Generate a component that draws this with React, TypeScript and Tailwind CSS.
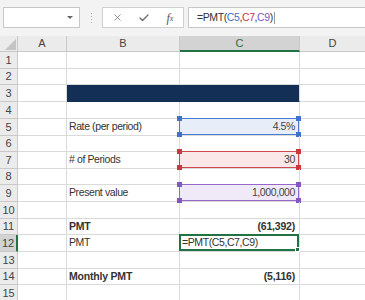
import { X, Check } from 'lucide-react'

type Tone = 'blue' | 'red' | 'purple'

const tones = {
  blue: { fill: 'bg-[#e8eef9]', line: 'border-[#4a7bd0]', dot: 'bg-[#3f72c9]' },
  red: { fill: 'bg-[#fae8e8]', line: 'border-[#d0474f]', dot: 'bg-[#c8383f]' },
  purple: { fill: 'bg-[#f0eaf8]', line: 'border-[#9368c9]', dot: 'bg-[#8457bf]' },
}

interface Row {
  n: number
  h: string
  label?: string
  value?: string
  bold?: boolean
  tone?: Tone
  band?: boolean
  active?: boolean
}

const rows: Row[] = [
  { n: 1, h: 'h-[17px]' },
  { n: 2, h: 'h-[16px]' },
  { n: 3, h: 'h-[17px]', band: true },
  { n: 4, h: 'h-[17px]' },
  { n: 5, h: 'h-[17px]', label: 'Rate (per period)', value: '4.5%', tone: 'blue' },
  { n: 6, h: 'h-[16px]' },
  { n: 7, h: 'h-[17px]', label: '# of Periods', value: '30', tone: 'red' },
  { n: 8, h: 'h-[16px]' },
  { n: 9, h: 'h-[17px]', label: 'Present value', value: '1,000,000', tone: 'purple' },
  { n: 10, h: 'h-[17px]' },
  { n: 11, h: 'h-[16px]', label: 'PMT', value: '(61,392)', bold: true },
  { n: 12, h: 'h-[17px]', label: 'PMT', active: true },
  { n: 13, h: 'h-[17px]' },
  { n: 14, h: 'h-[16px]', label: 'Monthly PMT', value: '(5,116)', bold: true },
  { n: 15, h: 'h-[17px]' },
]

function Handles({ dot }: { dot: string }) {
  return (
    <>
      <span className={`absolute -left-[3px] -top-[3px] w-[5px] h-[5px] ${dot}`} />
      <span className={`absolute -right-[3px] -top-[3px] w-[5px] h-[5px] ${dot}`} />
      <span className={`absolute -left-[3px] -bottom-[3px] w-[5px] h-[5px] ${dot}`} />
      <span className={`absolute -right-[3px] -bottom-[3px] w-[5px] h-[5px] ${dot}`} />
    </>
  )
}

function Toolbar() {
  return (
    <div className="h-[36px] bg-[#f3f3f3] flex items-start pt-[7px] pl-[3px]">
      {/* Name box */}
      <div className="w-[77px] h-[21px] bg-white border border-[#c8c8c8] flex items-center justify-end pr-[6px]">
        <span className="w-0 h-0 border-l-[3px] border-r-[3px] border-t-[3px] border-l-transparent border-r-transparent border-t-[#666]" />
      </div>
      <div className="w-[22px] h-[21px] flex flex-col items-center justify-center gap-[2px]">
        <span className="w-[1px] h-[1px] bg-[#b0b0b0]" />
        <span className="w-[1px] h-[1px] bg-[#b0b0b0]" />
        <span className="w-[1px] h-[1px] bg-[#b0b0b0]" />
        <span className="w-[1px] h-[1px] bg-[#b0b0b0]" />
      </div>
      {/* Cancel / enter / function */}
      <div className="w-[82px] h-[21px] bg-white border border-[#d0d0d0] flex items-center">
        <div className="w-[28px] flex justify-center pl-[2px]">
          <X className="w-[11px] h-[11px] text-[#6a6a6a]" strokeWidth={1.6} />
        </div>
        <div className="w-[27px] flex justify-center">
          <Check className="w-[12px] h-[12px] text-[#6a6a6a]" strokeWidth={2.6} />
        </div>
        <div className="w-[27px] flex justify-center font-['Liberation_Serif',serif] italic text-[12px] text-[#555] leading-none">
          f<span className="text-[8px] mt-[3px]">x</span>
        </div>
      </div>
      {/* Formula input */}
      <div className="ml-[4px] flex-1 h-[21px] bg-white border border-r-0 border-[#c8c8c8] flex items-center pl-[8px] text-[10.5px] tracking-[-0.4px] text-[#333]">
        <span>=PMT(</span>
        <span className="text-[#3f72c9]">C5</span>
        <span>,</span>
        <span className="text-[#c8383f]">C7</span>
        <span>,</span>
        <span className="text-[#8457bf]">C9</span>
        <span>)</span>
        <span className="ml-[1px] w-[1px] h-[12px] bg-[#999]" />
      </div>
    </div>
  )
}

function HeaderRow() {
  return (
    <div className="flex h-[16px] text-[11px] text-[#444]">
      <div className="w-[18px] shrink-0 bg-[#ebebeb] border-r border-b border-[#c9c9c9] relative">
        <span className="absolute right-[1px] bottom-[1px] w-0 h-0 border-b-[11px] border-l-[11px] border-l-transparent border-b-[#c4c4c4]" />
      </div>
      <div className="w-[49px] shrink-0 bg-[#ebebeb] border-r border-b border-[#c9c9c9] flex items-center justify-center">A</div>
      <div className="w-[113px] shrink-0 bg-[#ebebeb] border-r border-b border-[#c9c9c9] flex items-center justify-center">B</div>
      <div className="w-[120px] shrink-0 bg-[#d3d3d3] border-r border-[#c9c9c9] border-b-2 border-b-[#217346] flex items-center justify-center text-[#2f6b45]">C</div>
      <div className="flex-1 bg-[#ebebeb] border-b border-[#c9c9c9] flex items-center justify-center">D</div>
    </div>
  )
}

function SheetRow({ row }: { row: Row }) {
  const tone = row.tone ? tones[row.tone] : null
  const weight = row.bold ? 'font-bold tracking-[-0.2px]' : 'tracking-[-0.4px]'

  return (
    <div className={`flex ${row.h} text-[10.5px] text-[#333]`}>
      <div
        className={`w-[18px] shrink-0 border-b border-[#c9c9c9] flex items-center justify-center text-[11px] ${
          row.active ? 'bg-[#d3d3d3] border-r-2 border-r-[#217346] text-[#2f4f3a]' : 'bg-[#ebebeb] border-r text-[#444]'
        }`}
      >
        {row.n}
      </div>
      <div className="w-[49px] shrink-0 border-r border-b border-[#dadada]" />
      <div
        className={`w-[113px] shrink-0 border-b flex items-center pl-[2px] ${weight} ${
          row.band ? 'bg-[#132f55] border-[#132f55]' : 'border-r border-[#dadada]'
        }`}
      >
        {row.label}
      </div>
      <div
        className={`w-[120px] shrink-0 relative border-b flex items-center justify-end pr-[4px] ${weight} ${
          row.band ? 'bg-[#132f55] border-[#132f55] border-r border-r-[#dadada]' : 'border-r border-[#dadada]'
        } ${tone ? `${tone.fill} text-[#444]` : ''}`}
      >
        {tone && (
          <div className={`absolute -top-px -left-px right-0 bottom-0 border-[1.5px] ${tone.line}`}>
            <Handles dot={tone.dot} />
          </div>
        )}
        {row.active && (
          <div className="absolute -top-px -left-px right-0 bottom-0 border-2 border-[#217346] flex items-center pl-[1px] tracking-[-0.4px] text-[#333]">
            =PMT(C5,C7,C9)
            <span className="absolute -right-[3px] -bottom-[3px] w-[5px] h-[5px] bg-[#217346] border border-white" />
          </div>
        )}
        {row.value}
      </div>
      <div className="flex-1 border-b border-[#dadada]" />
    </div>
  )
}

export default function App() {
  return (
    <div className="w-[365px] h-[300px] overflow-hidden bg-white font-['Liberation_Sans',Arial,sans-serif]">
      <Toolbar />
      <HeaderRow />
      {rows.map((row) => (
        <SheetRow key={row.n} row={row} />
      ))}
    </div>
  )
}
